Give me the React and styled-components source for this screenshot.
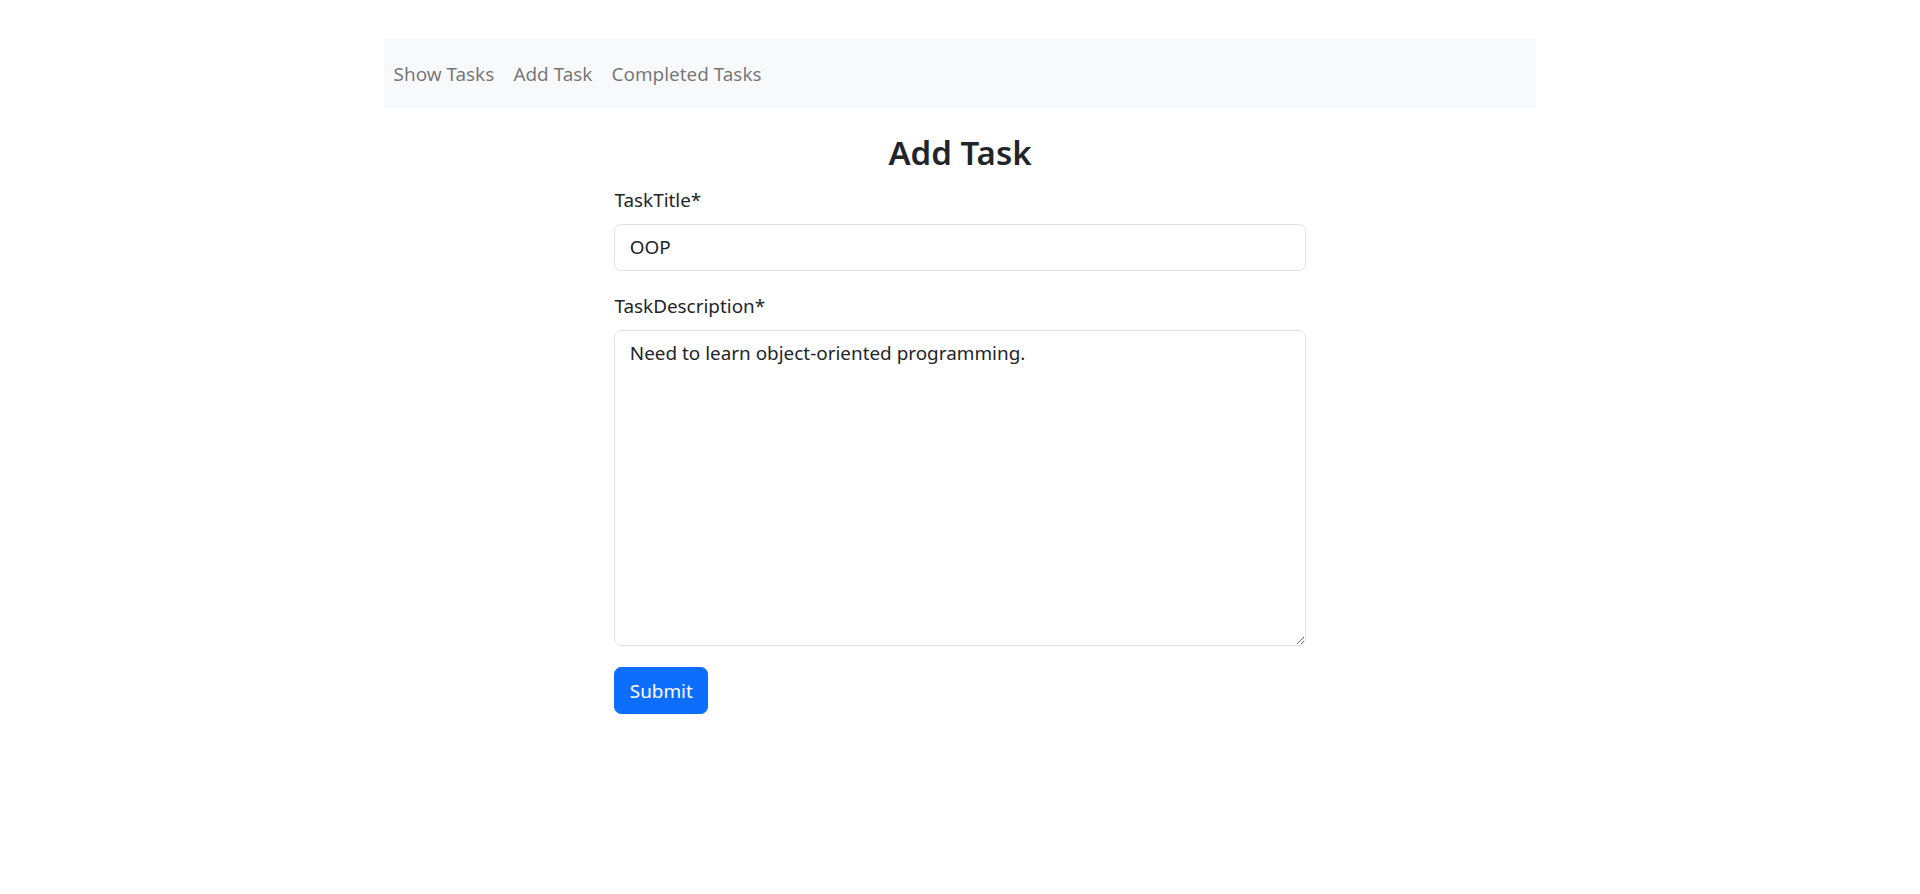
import React from 'react';
import styled, { createGlobalStyle } from 'styled-components';

const GlobalStyle = createGlobalStyle`
  * {
    box-sizing: border-box;
  }

  body {
    margin: 0;
    background: #fff;
    color: #212529;
    font-family: "Noto Sans", "Open Sans", Arial, sans-serif;
    font-size: 18.9px;
    line-height: 1.5;
  }
`;

const Page = styled.div`
  padding-top: 38px;
`;

const NavBar = styled.nav`
  width: 60%;
  height: 70px;
  margin: 0 auto;
  display: flex;
  align-items: center;
  background: #f8f9fa;
`;

const NavLink = styled.a`
  padding: 3px 9.6px 0;
  color: rgba(0, 0, 0, 0.55);
  text-decoration: none;
  cursor: pointer;

  &:hover {
    color: rgba(0, 0, 0, 0.7);
  }
`;

const FormWrapper = styled.main`
  width: 36%;
  margin: 0 auto;
`;

const Title = styled.h3`
  margin: 25px 0 13px;
  text-align: center;
  font-size: 33px;
  font-weight: 600;
  line-height: 1.2;
`;

const Field = styled.div`
  margin-bottom: ${p => p.$gap || '21px'};
`;

const Label = styled.label`
  display: block;
  margin-bottom: 10px;
`;

const inputBase = `
  display: block;
  width: 100%;
  padding: 7.2px 14.4px;
  font: inherit;
  color: #212529;
  background: #fff;
  border: 1.2px solid #dee2e6;
  border-radius: 7.2px;
  outline: none;

  &:focus {
    border-color: #86b7fe;
    box-shadow: 0 0 0 4.8px rgba(13, 110, 253, 0.25);
  }
`;

const TextInput = styled.input`
  ${inputBase}
  height: 47px;
`;

const TextArea = styled.textarea`
  ${inputBase}
  height: 316px;
  resize: vertical;
`;

const SubmitButton = styled.button`
  display: inline-block;
  height: 47px;
  padding: 0 14.4px;
  font: inherit;
  color: #fff;
  background: #0d6efd;
  border: 1.2px solid #0d6efd;
  border-radius: 7.2px;
  cursor: pointer;

  &:hover {
    background: #0b5ed7;
  }
`;

const links = ['Show Tasks', 'Add Task', 'Completed Tasks'];

const App = () => (
  <>
    <GlobalStyle />
    <Page>
      <NavBar>
        {links.map(link => (
          <NavLink key={link}>{link}</NavLink>
        ))}
      </NavBar>
      <FormWrapper>
        <Title>Add Task</Title>
        <form onSubmit={e => e.preventDefault()}>
          <Field>
            <Label htmlFor="title">TaskTitle*</Label>
            <TextInput id="title" type="text" defaultValue="OOP" />
          </Field>
          <Field $gap="21px">
            <Label htmlFor="description">TaskDescription*</Label>
            <TextArea
              id="description"
              defaultValue="Need to learn object-oriented programming."
            />
          </Field>
          <SubmitButton type="submit">Submit</SubmitButton>
        </form>
      </FormWrapper>
    </Page>
  </>
);

export default App;
